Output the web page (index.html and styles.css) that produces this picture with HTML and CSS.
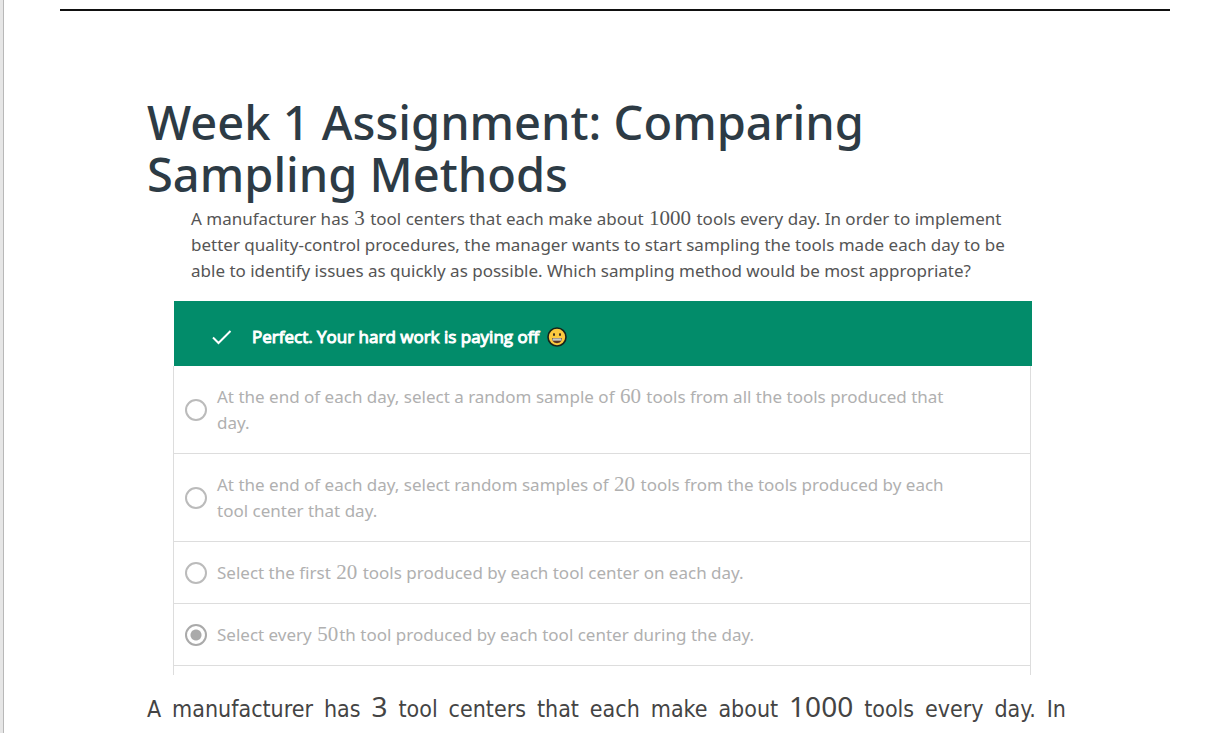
FILE: index.html
```html
<!DOCTYPE html>
<html lang="en">
<head>
<meta charset="utf-8">
<meta name="viewport" content="width=device-width, initial-scale=1">
<title>Week 1 Assignment: Comparing Sampling Methods</title>
<link rel="stylesheet" href="styles.css">
</head>
<body>
<main class="page">
  <hr class="rule">
  <article class="content">
    <h1 class="title">Week 1 Assignment: Comparing Sampling Methods</h1>
    <section class="quiz">
      <p class="question" id="question">A manufacturer has <span class="num">3</span> tool centers that each make about <span class="num">1000</span> tools every day. In order to implement better quality-control procedures, the manager wants to start sampling the tools made each day to be able to identify issues as quickly as possible. Which sampling method would be most appropriate?</p>
      <div class="banner" role="status">
        <svg class="check" viewBox="0 0 20 16" aria-hidden="true"><path d="M1 8.500L6.500 14L18.500 2"/></svg>
        <span class="message">Perfect. Your hard work is paying off</span>
        <svg class="smiley" viewBox="0 0 20 20" role="img" aria-label="Grinning face">
          <circle cx="10" cy="10" r="9" fill="#fcc93f" stroke="#17231b" stroke-width="1.600"/>
          <ellipse cx="7" cy="7.500" rx="1" ry="1.600" fill="#32251c"/>
          <ellipse cx="13" cy="7.500" rx="1" ry="1.600" fill="#32251c"/>
          <path d="M5 11h10c0 3.300-2.200 5.200-5 5.200S5 14.300 5 11z" fill="#5a3524"/>
          <path d="M5.500 11.300h9v2.400h-9z" fill="#c9c9c2"/>
        </svg>
      </div>
      <div class="options" role="radiogroup" aria-labelledby="question">
        <label class="option"><input class="radio" type="radio" name="answer" disabled><span class="answer">At the end of each day, select a random sample of <span class="num">60</span> tools from all the tools produced that day.</span></label>
        <label class="option"><input class="radio" type="radio" name="answer" disabled><span class="answer">At the end of each day, select random samples of <span class="num">20</span> tools from the tools produced by each tool center that day.</span></label>
        <label class="option"><input class="radio" type="radio" name="answer" disabled><span class="answer">Select the first <span class="num">20</span> tools produced by each tool center on each day.</span></label>
        <label class="option"><input class="radio" type="radio" name="answer" disabled checked><span class="answer">Select every <span class="num">50</span>th tool produced by each tool center during the day.</span></label>
      </div>
    </section>
    <p class="notes">A manufacturer has <span class="big">3</span> tool centers that each make about <span class="big">1000</span> tools every day. In</p>
  </article>
</main>
</body>
</html>
```
FILE: styles.css
```css
* {
  box-sizing: border-box;
}

body {
  margin: 0;
  background: #fff;
  font-family: "Noto Sans", "Open Sans", sans-serif;
}

.page {
  min-height: 100vh;
  margin-left: 3px;
  padding: 9px 54px 0 56px;
  border-left: 1px solid #b8b8b8;
  box-shadow: -3px 0 #e6e6e6;
}

.rule {
  height: 2px;
  margin: 0;
  border: 0;
  background: #111;
}

.content {
  padding: 85px 104px 0 87px;
}

.title {
  margin: 0;
  color: #2d3b45;
  font-size: 47px;
  font-weight: 500;
  line-height: 52px;
}

.quiz {
  margin: 6px 34px 0 26px;
}

.question {
  margin: 0;
  padding: 0 18px 17px;
  color: #555;
  font-size: 17px;
  line-height: 26px;
}

.num {
  margin: 0 1px;
  font-family: "Liberation Serif", serif;
  font-size: 21px;
  line-height: 1;
}

.banner {
  display: flex;
  align-items: center;
  min-height: 65px;
  margin-left: 1px;
  padding: 7px 38px 0;
  background: #028c6a;
  color: #fff;
}

.check {
  width: 20px;
  height: 16px;
  fill: none;
  stroke: #fff;
  stroke-width: 2;
}

.message {
  margin: 0 8px 0 20px;
  font-family: "Open Sans", sans-serif;
  font-size: 17px;
  line-height: 26px;
  -webkit-text-stroke: 1px #fff;
}

.smiley {
  width: 20px;
  height: 20px;
}

.options {
  margin-right: 1px;
  padding-bottom: 9px;
  border: solid #ddd;
  border-width: 0 1px;
}

.option {
  display: flex;
  align-items: center;
  gap: 10px;
  padding: 18px 64px 17px 11px;
  border-bottom: 1px solid #ddd;
  color: #b0b0b0;
  font-size: 17px;
  line-height: 26px;
}

.radio {
  flex: none;
  width: 22px;
  height: 22px;
  margin: 0;
  appearance: none;
  border: 2px solid #bbb;
  border-radius: 50%;
}

.radio:checked {
  border-color: #aaa;
  background: radial-gradient(circle, #aaa 5px, transparent 6px);
}

.notes {
  margin: 17px 0 0;
  color: #444;
  font-family: "DejaVu Sans Condensed", "DejaVu Sans", sans-serif;
  font-size: 23px;
  line-height: 34px;
  text-align: justify;
  text-align-last: justify;
}

.big {
  font-family: "Noto Sans", sans-serif;
  font-size: 28px;
  line-height: 1;
}
```
